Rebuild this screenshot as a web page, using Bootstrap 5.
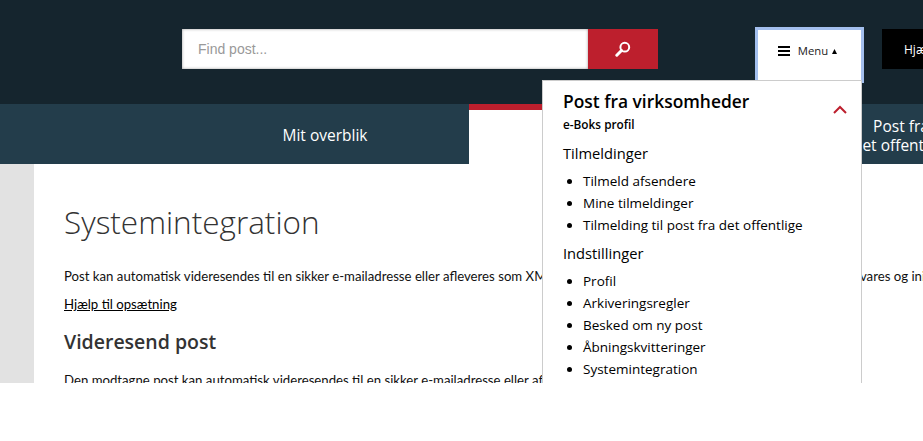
<!DOCTYPE html>
<html lang="da">
<head>
<meta charset="utf-8">
<title>Systemintegration</title>
<link href="https://cdn.jsdelivr.net/npm/bootstrap@5.3.0/dist/css/bootstrap.min.css" rel="stylesheet">
<style>
html,body{background:#fff;overflow:hidden}
body{font-family:"Open Sans","Noto Sans",sans-serif;font-size:13.5px;color:#000}
.app-shell{height:383px;overflow:hidden;position:relative}
.top-head{height:104px;background:#15252e;padding:29px 0 0 182px;overflow:hidden}
.search-box{flex:0 0 476px;height:40px}
.search-field{flex:1;min-width:0;border:0;border-radius:0;background:#fff;box-shadow:inset 0 0 3px #999;padding:0 16px;font:14px "Liberation Sans",sans-serif;outline:0}
.search-field::placeholder{color:#999}
.search-btn{flex:0 0 70px;background:#bd1f2d;border:0;border-radius:0;padding:0}
.menu-toggle{flex:0 0 109px;height:56px;margin:-2px 0 0 97px;background:#fff;border:3px solid #a3bfee;border-bottom-width:0;color:#222;font-size:11.3px;padding:0 4px 11px 0}
.help-btn{flex:0 0 80px;height:40px;margin-left:18px;background:#000;color:#fff;font-size:12px;padding-left:22px;line-height:41px;white-space:nowrap}
.tab-strip{height:60px;background:#233d4b;padding-left:181px;overflow:hidden}
.tab-item{flex:0 0 288px;color:#fff;font-size:15.5px;line-height:19px;text-align:center;padding-top:3px}
.tab-active{background:#fff;border-top:6px solid #bd1f2d}
.side-rail{width:34px;background:#e2e2e2}
.main-pane{padding:36px 0 0 30px;white-space:nowrap;min-width:0;flex:1;overflow:hidden;color:#111}
.page-title{font-size:31.5px;font-weight:300;color:#333;margin:0 0 22px;line-height:44px}
.main-pane p{margin:0 0 7px;line-height:21px;font-family:Lato,"Open Sans",sans-serif;font-size:13.2px}
.main-pane a{color:#000}
.sub-title{font-size:19.5px;font-weight:600;color:#333;margin:13px 0 14px;line-height:28px}
.drop-panel{position:absolute;left:542px;top:80px;width:320px;height:320px;background:#fff;border:1px solid #ccc;padding:8px 20px;z-index:5}
.panel-title{font-size:17.4px;font-weight:600;line-height:24px;margin:0 0 3px}
.panel-sub{font-size:11.8px;font-weight:600;line-height:16px;margin-bottom:11px}
.panel-head{font-size:14.7px;font-weight:500;line-height:20px;margin:0 0 7px}
.panel-list{margin:0 0 7px;padding-left:20px;font-size:13.5px}
.panel-list li{line-height:22px}
.panel-chevron{position:absolute;right:14px;top:24px}
</style>
</head>
<body>
<div class="app-shell">
  <header class="top-head d-flex align-items-start">
    <form class="search-box d-flex">
      <input class="search-field" type="text" placeholder="Find post...">
      <button class="search-btn d-flex align-items-center justify-content-center" type="button" aria-label="Søg">
        <svg width="16" height="16" viewBox="0 0 16 16" fill="none" stroke="#fff"><circle cx="9.8" cy="6.2" r="4.4" stroke-width="2"/><path d="M6.5 9.5 1.8 14.2" stroke-width="3" stroke-linecap="round"/></svg>
      </button>
    </form>
    <div class="menu-toggle d-flex align-items-center justify-content-center">
      <svg class="me-2" width="12" height="10" viewBox="0 0 12 10" fill="#000"><rect width="12" height="2"/><rect y="4" width="12" height="2"/><rect y="8" width="12" height="2"/></svg>
      <span>Menu</span>
      <svg class="ms-1" width="5" height="5" viewBox="0 0 5 5" fill="#000"><path d="M2.5 0 5 5H0z"/></svg>
    </div>
    <div class="help-btn">Hjælp</div>
  </header>
  <nav class="tab-strip d-flex">
    <div class="tab-item d-flex align-items-center justify-content-center">Mit overblik</div>
    <div class="tab-item tab-active"></div>
    <div class="tab-item d-flex align-items-center justify-content-center">Post fra<br>det offentlige</div>
  </nav>
  <div class="d-flex h-100">
    <div class="side-rail"></div>
    <main class="main-pane">
      <h1 class="page-title">Systemintegration</h1>
      <p>Post kan automatisk videresendes til en sikker e-mailadresse eller afleveres som XML-filer til din virksomheds systemer, hvor den kan opbevares og initieres</p>
      <p><a href="#">Hjælp til opsætning</a></p>
      <h2 class="sub-title">Videresend post</h2>
      <p>Den modtagne post kan automatisk videresendes til en sikker e-mailadresse eller afleveres</p>
    </main>
  </div>
  <aside class="drop-panel">
    <div class="panel-title">Post fra virksomheder</div>
    <div class="panel-sub">e-Boks profil</div>
    <svg class="panel-chevron" width="14" height="9" viewBox="0 0 14 9" fill="none" stroke="#bd1f2d" stroke-width="2"><path d="M1 8 7 2l6 6"/></svg>
    <div class="panel-head">Tilmeldinger</div>
    <ul class="panel-list">
      <li>Tilmeld afsendere</li>
      <li>Mine tilmeldinger</li>
      <li>Tilmelding til post fra det offentlige</li>
    </ul>
    <div class="panel-head">Indstillinger</div>
    <ul class="panel-list">
      <li>Profil</li>
      <li>Arkiveringsregler</li>
      <li>Besked om ny post</li>
      <li>Åbningskvitteringer</li>
      <li>Systemintegration</li>
    </ul>
  </aside>
</div>
<script src="https://cdn.jsdelivr.net/npm/bootstrap@5.3.0/dist/js/bootstrap.bundle.min.js"></script>
</body>
</html>
